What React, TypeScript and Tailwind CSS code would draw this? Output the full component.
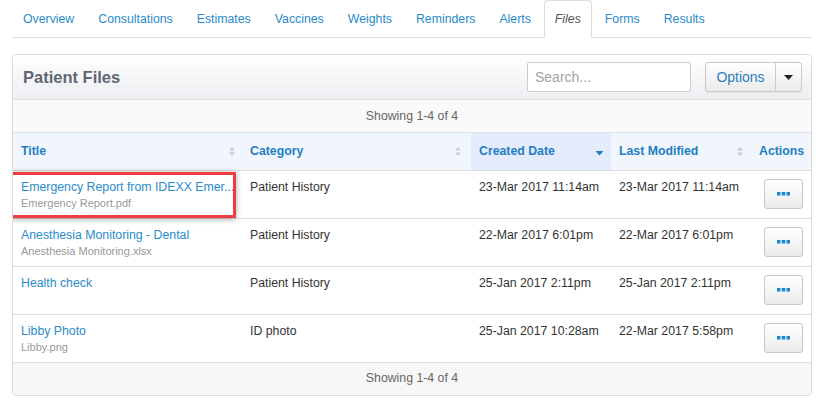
import React from "react";

const tabs = ["Overview", "Consultations", "Estimates", "Vaccines", "Weights", "Reminders", "Alerts", "Files", "Forms", "Results"];

const rows = [
  { title: "Emergency Report from IDEXX Emer...", file: "Emergency Report.pdf", category: "Patient History", created: "23-Mar 2017 11:14am", modified: "23-Mar 2017 11:14am", highlight: true },
  { title: "Anesthesia Monitoring - Dental", file: "Anesthesia Monitoring.xlsx", category: "Patient History", created: "22-Mar 2017 6:01pm", modified: "22-Mar 2017 6:01pm" },
  { title: "Health check", file: "", category: "Patient History", created: "25-Jan 2017 2:11pm", modified: "25-Jan 2017 2:11pm" },
  { title: "Libby Photo", file: "Libby.png", category: "ID photo", created: "25-Jan 2017 10:28am", modified: "22-Mar 2017 5:58pm" },
];

const SortBoth = () => (
  <svg width="8" height="11" viewBox="0 0 8 11" className="shrink-0">
    <path d="M4 1 L7 4.5 H1 Z" fill="#c8ccd2" />
    <path d="M4 10 L7 6.5 H1 Z" fill="#c8ccd2" />
  </svg>
);

const SortDown = () => (
  <svg width="9" height="6" viewBox="0 0 9 6" className="shrink-0">
    <path d="M0.5 1 H8.5 L4.5 5.5 Z" fill="#1f7fc1" />
  </svg>
);

const Dots = () => (
  <svg width="13" height="4" viewBox="0 0 13 4">
    <rect x="0" y="0" width="3.5" height="3.5" fill="#1a86c8" />
    <rect x="4.75" y="0" width="3.5" height="3.5" fill="#1a86c8" />
    <rect x="9.5" y="0" width="3.5" height="3.5" fill="#1a86c8" />
  </svg>
);

export default function App() {
  return (
    <div className="w-[823px] h-[403px] bg-white pl-[12px] pr-[11px] text-[12.3px] text-[#333]" style={{ fontFamily: '"Liberation Sans", Arial, sans-serif' }}>
      {/* tabs */}
      <ul className="flex h-[38px] border-b border-[#dddddd]">
        {tabs.map((t) => {
          const active = t === "Files";
          return (
            <li
              key={t}
              className={
                active
                  ? "mr-[2px] -mb-px flex items-center px-[10px] pt-px border border-[#dddddd] border-b-white rounded-t-[4px] bg-white italic text-[#555]"
                  : "mr-[2px] flex items-center px-[10px] pt-px border border-transparent text-[#2a8bc7]"
              }
            >
              {t}
            </li>
          );
        })}
      </ul>

      {/* panel */}
      <div className="mt-[16px] border border-[#dddddd] rounded-[4px] overflow-hidden">
        <div className="h-[45px] flex items-center justify-between pl-[10px] pr-[9px] bg-gradient-to-b from-white to-[#eceef1] border-b border-[#dde0e4]">
          <h2 className="text-[16.5px] font-bold text-[#5f6773]">Patient Files</h2>
          <div className="flex items-center">
            <div className="w-[164px] h-[30px] border border-[#cccccc] rounded-[2px] bg-white flex items-center px-[7px] text-[14px] text-[#a0a4aa]">Search...</div>
            <div className="ml-[14px] flex h-[30px] border border-[#c8c8c8] rounded-[3px] bg-gradient-to-b from-white to-[#ebebeb] shadow-[0_1px_1px_rgba(0,0,0,0.05)]">
              <div className="w-[70px] flex items-center justify-center text-[14px] text-[#2a7fbd] border-r border-[#cccccc]">Options</div>
              <div className="w-[25px] flex items-center justify-center">
                <svg width="9" height="5" viewBox="0 0 9 5">
                  <path d="M0 0 H9 L4.5 5 Z" fill="#222" />
                </svg>
              </div>
            </div>
          </div>
        </div>

        <div className="h-[33px] flex items-center justify-center bg-[#fafafa] border-b border-[#dde3ea] text-[#666]">Showing 1-4 of 4</div>

        <table className="w-full table-fixed border-collapse">
          <colgroup>
            <col className="w-[229px]" />
            <col className="w-[229px]" />
            <col className="w-[140px]" />
            <col className="w-[140px]" />
            <col />
          </colgroup>
          <thead>
            <tr className="h-[37px] bg-[#f1f6fd] text-[#1f7fc1] font-bold border-b border-[#dddddd]">
              <th className="text-left pl-[8px] pr-[6px] font-bold">
                <div className="flex items-center justify-between"><span>Title</span><SortBoth /></div>
              </th>
              <th className="text-left pl-[8px] pr-[9px] font-bold">
                <div className="flex items-center justify-between"><span>Category</span><SortBoth /></div>
              </th>
              <th className="text-left pl-[8px] pr-[7px] font-bold bg-[#e4ecfb]">
                <div className="flex items-center justify-between"><span>Created Date</span><span className="pt-[4px]"><SortDown /></span></div>
              </th>
              <th className="text-left pl-[8px] pr-[7px] font-bold">
                <div className="flex items-center justify-between"><span>Last Modified</span><SortBoth /></div>
              </th>
              <th className="text-left pl-[8px] font-bold">Actions</th>
            </tr>
          </thead>
          <tbody>
            {rows.map((r) => (
              <tr key={r.title} className="h-[48px] border-b border-[#dddddd] align-top">
                <td className="relative pl-[8px] pt-[8px]">
                  <div className="text-[#2a8bc7] whitespace-nowrap leading-[16px]">{r.title}</div>
                  {r.file && <div className="text-[11px] text-[#999] leading-[14px] mt-[1px]">{r.file}</div>}
                  {r.highlight && (
                    <div className="absolute left-[-4px] top-[1px] w-[227px] h-[46px] border-[3px] border-[#ee3e44] shadow-[0_1px_6px_rgba(0,0,0,0.35)] pointer-events-none" />
                  )}
                </td>
                <td className="pl-[8px] pt-[8px] leading-[16px]">{r.category}</td>
                <td className="pl-[8px] pt-[8px] leading-[16px] whitespace-nowrap">{r.created}</td>
                <td className="pl-[8px] pt-[8px] leading-[16px] whitespace-nowrap">{r.modified}</td>
                <td className="pl-[13px] align-middle">
                  <div className="w-[39px] h-[30px] border border-[#c8c8c8] rounded-[3px] bg-gradient-to-b from-white to-[#ebebeb] flex items-center justify-center">
                    <Dots />
                  </div>
                </td>
              </tr>
            ))}
          </tbody>
        </table>

        <div className="h-[32px] flex items-center justify-center bg-[#f7f7f7] text-[#666]">Showing 1-4 of 4</div>
      </div>
    </div>
  );
}
